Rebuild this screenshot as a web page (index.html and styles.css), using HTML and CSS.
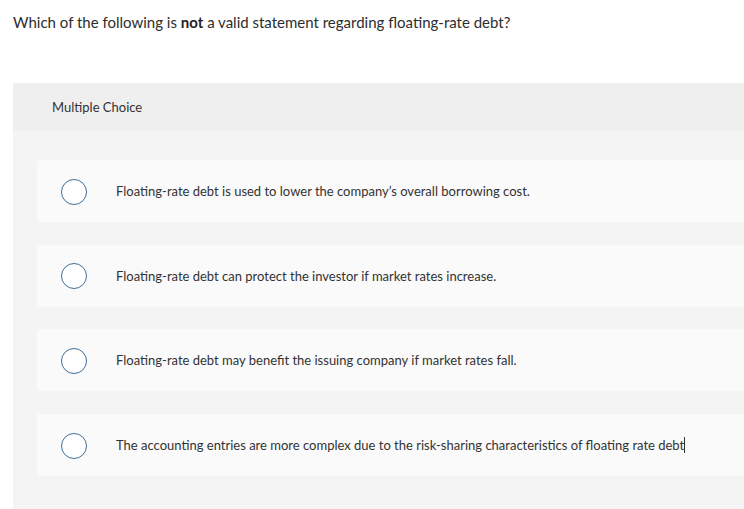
FILE: index.html
```html
<!DOCTYPE html>
<html>
<head>
<meta charset="utf-8">
<link rel="stylesheet" href="styles.css">
</head>
<body>
<div class="page">
  <p class="question">Which of the following is <b>not</b> a valid statement regarding floating-rate debt?</p>
  <section class="panel">
    <div class="panel-head">Multiple Choice</div>
    <div class="options">
      <div class="option"><span class="radio"></span><span class="label">Floating-rate debt is used to lower the company’s overall borrowing cost.</span></div>
      <div class="option"><span class="radio"></span><span class="label">Floating-rate debt can protect the investor if market rates increase.</span></div>
      <div class="option"><span class="radio"></span><span class="label">Floating-rate debt may benefit the issuing company if market rates fall.</span></div>
      <div class="option"><span class="radio"></span><span class="label">The accounting entries are more complex due to the risk-sharing characteristics of floating rate debt<span class="caret"></span></span></div>
    </div>
  </section>
</div>
</body>
</html>
```
FILE: styles.css
```css
html, body {
  margin: 0;
  padding: 0;
  background: #ffffff;
  overflow: hidden;
}
body {
  font-family: Lato, "Open Sans", "Liberation Sans", sans-serif;
  color: #333333;
}
.page {
  width: 744px;
  height: 509px;
  overflow: hidden;
}
.question {
  margin: 0;
  padding: 13px 0 0 13px;
  height: 83px;
  box-sizing: border-box;
  font-size: 15px;
  line-height: 18px;
  color: #2d2d2d;
}
.question b {
  font-weight: 700;
  color: #222;
}
.panel {
  margin-left: 13px;
  width: 760px;
  background: #f4f4f4;
  height: 440px;
}
.panel-head {
  height: 47px;
  background: #efefef;
  box-sizing: border-box;
  padding: 16px 0 0 39px;
  font-size: 13px;
  line-height: 16px;
  color: #333;
}
.options {
  padding: 30px 0 0 24px;
  display: flex;
  flex-direction: column;
  gap: 22.7px;
}
.option {
  height: 62px;
  background: #fafafa;
  display: flex;
  align-items: center;
  padding-left: 24px;
  box-sizing: border-box;
  border-radius: 2px;
}
.radio {
  width: 24px;
  height: 24px;
  border: 1.3px solid #3f6d98;
  border-radius: 50%;
  flex: none;
  background: #ffffff;
  margin-top: 1px;
}
.label {
  margin-left: 29px;
  font-size: 13px;
  line-height: 16px;
  color: #333;
}
.caret {
  display: inline-block;
  width: 1px;
  height: 16px;
  background: #333;
  vertical-align: -3px;
}
```
